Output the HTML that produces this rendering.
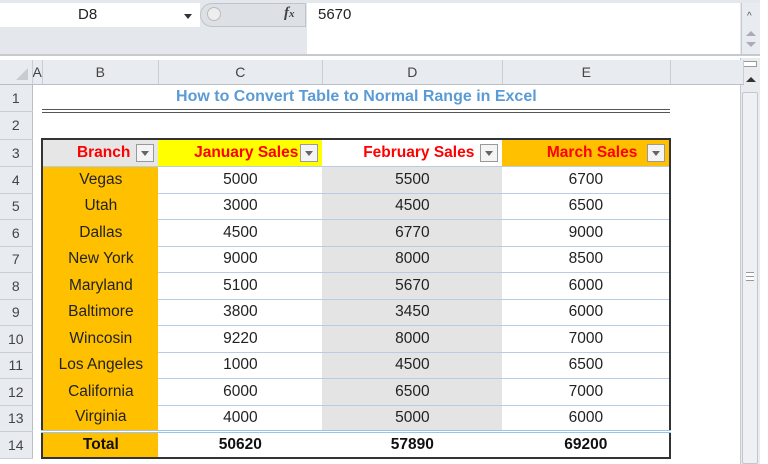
<!DOCTYPE html>
<html><head><style>
*{margin:0;padding:0;box-sizing:border-box}
body{width:768px;height:464px;overflow:hidden;background:#fff;font-family:"Liberation Sans",sans-serif;position:relative}
.a{position:absolute}
table{border-collapse:collapse;table-layout:fixed}
td{padding:0;font-size:15.5px;text-align:center;white-space:nowrap;overflow:hidden;color:#222}
.rh{background:#e8ebef;color:#444;border-bottom:1px solid #c9ced5;border-right:1px solid #b9bfc7;font-size:14px}
.ch td{background:#e8ebef;color:#444;border-right:1px solid #c9ced5;border-bottom:1px solid #b9bfc7;font-size:14px}
.b{background:#ffc000}
.d{background:#e4e4e4}
.hdr td{font-weight:bold;color:#f00;position:relative}
.dd{position:absolute;right:4px;top:4px;width:18px;height:18px;border:1px solid #999;background:#f4f4f4}
.dd:after{content:"";position:absolute;left:4px;top:6px;border-left:4px solid transparent;border-right:4px solid transparent;border-top:5px solid #666}
</style></head><body>
<div class="a" style="left:0;top:0;width:768px;height:56px;background:#e4e7ec;border-bottom:2px solid #c5cad1"></div>
<div class="a" style="left:0;top:3px;width:200px;height:24px;background:#fff"></div>
<div class="a" style="left:78px;top:6px;font-size:15px;color:#222">D8</div>
<div class="a" style="left:184px;top:14px;border-left:4px solid transparent;border-right:4px solid transparent;border-top:5px solid #333"></div>
<div class="a" style="left:200px;top:3px;width:106px;height:24px;background:#dde0e5;border-radius:12px 0 0 12px;border:1px solid #c0c4ca"></div>
<div class="a" style="left:207px;top:7px;width:14px;height:14px;border-radius:7px;background:#eee;border:1px solid #bbb"></div>
<div class="a" style="left:284px;top:5px;font-family:'Liberation Serif',serif;font-style:italic;font-weight:bold;font-size:15px;color:#444">f<span style="font-size:11px">x</span></div>
<div class="a" style="left:307px;top:3px;width:433px;height:51px;background:#fff"></div>
<div class="a" style="left:318px;top:6px;font-size:15px;color:#222">5670</div>
<div class="a" style="left:741px;top:3px;width:19px;height:51px;background:#e8ebef;border-left:1px solid #c5cad1"></div>
<div class="a" style="left:747px;top:11px;font-size:10px;color:#555">^</div>
<div class="a" style="left:746px;top:31px;border-left:5px solid transparent;border-right:5px solid transparent;border-bottom:5px solid #aab"></div>
<div class="a" style="left:746px;top:42px;border-left:5px solid transparent;border-right:5px solid transparent;border-top:5px solid #aab"></div>
<div class="a" style="left:760px;top:0;width:8px;height:464px;background:#fff"></div>
<div class="a" style="left:740px;top:58px;width:20px;height:406px;background:#e9ebee;border-left:1px solid #c5cad1"></div>
<div class="a" style="left:743px;top:61px;width:14px;height:6px;border:1px solid #999;background:#fff"></div>
<div class="a" style="left:746px;top:77px;border-left:5px solid transparent;border-right:5px solid transparent;border-bottom:5px solid #333"></div>
<div class="a" style="left:742px;top:92px;width:16px;height:372px;background:#eef0f3;border:1px solid #c2c7ce;border-radius:2px"></div>
<div class="a" style="left:746px;top:272px;width:8px;height:9px;border-top:1px solid #999;border-bottom:1px solid #999;background:linear-gradient(#fff 0 3px,#999 3px 4px,#fff 4px)"></div>
<div class="a" style="left:0;top:60px">
<table>
<colgroup><col style="width:32px"><col style="width:7px"><col style="width:116px"><col style="width:164px"><col style="width:180px"><col style="width:168px"><col style="width:73px"></colgroup>
<tr class="ch" style="height:24px"><td style="position:relative"><div style="position:absolute;right:4px;bottom:4px;border-left:12px solid transparent;border-bottom:12px solid #c8ccd2"></div></td><td>A</td><td>B</td><td>C</td><td>D</td><td>E</td><td></td></tr>
<tr style="height:27px"><td class="rh">1</td><td></td><td colspan="4" style="font-weight:bold;color:#5b9bd5;font-size:16px;border-bottom:4px double #555">How to Convert Table to Normal Range in Excel</td><td></td></tr>
<tr style="height:28px"><td class="rh">2</td><td></td><td></td><td></td><td></td><td></td><td></td></tr>
<tr class="hdr" style="height:27px"><td class="rh" style="color:#444;font-weight:normal">3</td><td></td>
<td style="background:#e6e6e6;border-top:2px solid #333;border-left:2px solid #333;border-bottom:1px solid #b8cce4;text-align:right;padding-right:28px">Branch<span class="dd"></span></td>
<td style="background:#ff0;border-top:2px solid #333;border-bottom:1px solid #b8cce4;text-align:right;padding-right:24px">January Sales<span class="dd"></span></td>
<td style="border-top:2px solid #333;border-bottom:1px solid #b8cce4;text-align:right;padding-right:28px">February Sales<span class="dd"></span></td>
<td style="background:#ffc000;border-top:2px solid #333;border-right:2px solid #333;border-bottom:1px solid #b8cce4;text-align:right;padding-right:32px">March Sales<span class="dd"></span></td><td></td></tr>
<tr style="height:27px"><td class="rh">4</td><td></td><td class="b" style="border-left:2px solid #333">Vegas</td><td style="border-bottom:1px solid #b8cce4">5000</td><td class="d" style="border-bottom:1px solid #b8cce4">5500</td><td style="border-bottom:1px solid #b8cce4;border-right:2px solid #333">6700</td><td></td></tr>
<tr style="height:26px"><td class="rh">5</td><td></td><td class="b" style="border-left:2px solid #333">Utah</td><td style="border-bottom:1px solid #b8cce4">3000</td><td class="d" style="border-bottom:1px solid #b8cce4">4500</td><td style="border-bottom:1px solid #b8cce4;border-right:2px solid #333">6500</td><td></td></tr>
<tr style="height:27px"><td class="rh">6</td><td></td><td class="b" style="border-left:2px solid #333">Dallas</td><td style="border-bottom:1px solid #b8cce4">4500</td><td class="d" style="border-bottom:1px solid #b8cce4">6770</td><td style="border-bottom:1px solid #b8cce4;border-right:2px solid #333">9000</td><td></td></tr>
<tr style="height:26px"><td class="rh">7</td><td></td><td class="b" style="border-left:2px solid #333">New York</td><td style="border-bottom:1px solid #b8cce4">9000</td><td class="d" style="border-bottom:1px solid #b8cce4">8000</td><td style="border-bottom:1px solid #b8cce4;border-right:2px solid #333">8500</td><td></td></tr>
<tr style="height:27px"><td class="rh">8</td><td></td><td class="b" style="border-left:2px solid #333">Maryland</td><td style="border-bottom:1px solid #b8cce4">5100</td><td class="d" style="border-bottom:1px solid #b8cce4">5670</td><td style="border-bottom:1px solid #b8cce4;border-right:2px solid #333">6000</td><td></td></tr>
<tr style="height:26px"><td class="rh">9</td><td></td><td class="b" style="border-left:2px solid #333">Baltimore</td><td style="border-bottom:1px solid #b8cce4">3800</td><td class="d" style="border-bottom:1px solid #b8cce4">3450</td><td style="border-bottom:1px solid #b8cce4;border-right:2px solid #333">6000</td><td></td></tr>
<tr style="height:27px"><td class="rh">10</td><td></td><td class="b" style="border-left:2px solid #333">Wincosin</td><td style="border-bottom:1px solid #b8cce4">9220</td><td class="d" style="border-bottom:1px solid #b8cce4">8000</td><td style="border-bottom:1px solid #b8cce4;border-right:2px solid #333">7000</td><td></td></tr>
<tr style="height:26px"><td class="rh">11</td><td></td><td class="b" style="border-left:2px solid #333">Los Angeles</td><td style="border-bottom:1px solid #b8cce4">1000</td><td class="d" style="border-bottom:1px solid #b8cce4">4500</td><td style="border-bottom:1px solid #b8cce4;border-right:2px solid #333">6500</td><td></td></tr>
<tr style="height:27px"><td class="rh">12</td><td></td><td class="b" style="border-left:2px solid #333">California</td><td style="border-bottom:1px solid #b8cce4">6000</td><td class="d" style="border-bottom:1px solid #b8cce4">6500</td><td style="border-bottom:1px solid #b8cce4;border-right:2px solid #333">7000</td><td></td></tr>
<tr style="height:26px"><td class="rh">13</td><td></td><td class="b" style="border-left:2px solid #333">Virginia</td><td>4000</td><td class="d">5000</td><td style="border-right:2px solid #333">6000</td><td></td></tr>
<tr style="height:27px;font-weight:bold"><td class="rh" style="font-weight:normal">14</td><td></td>
<td class="b" style="border-left:2px solid #333;border-bottom:2px solid #333;border-top:3px double #9dc3e6;font-weight:bold;color:#111">Total</td>
<td style="border-bottom:2px solid #333;border-top:3px double #9dc3e6;font-weight:bold;color:#111">50620</td>
<td style="border-bottom:2px solid #333;border-top:3px double #9dc3e6;font-weight:bold;color:#111">57890</td>
<td style="border-right:2px solid #333;border-bottom:2px solid #333;border-top:3px double #9dc3e6;font-weight:bold;color:#111">69200</td><td></td></tr>
</table></div>
</body></html>
